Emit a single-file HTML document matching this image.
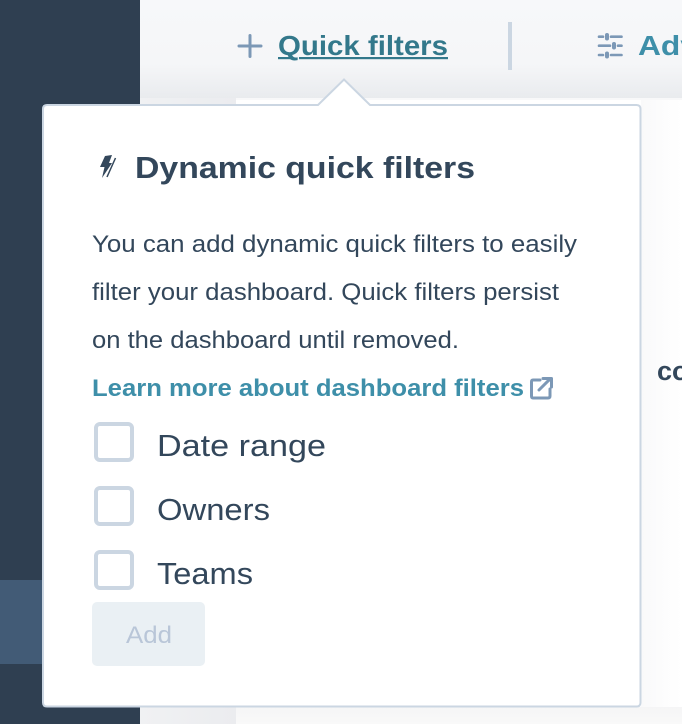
<!DOCTYPE html>
<html><head><meta charset="utf-8">
<style>
html,body{margin:0;padding:0;width:682px;height:724px;overflow:hidden;background:#f6f8fa}
svg{display:block}
text{font-family:"Liberation Sans",sans-serif;fill:#33475b}
</style></head>
<body>
<svg width="682" height="724" viewBox="0 0 682 724" xmlns="http://www.w3.org/2000/svg">
<defs>
<linearGradient id="top" x1="0" y1="0" x2="0" y2="1"><stop offset="0" stop-color="#f7f8fa"/><stop offset="0.65" stop-color="#f5f6f8"/><stop offset="1" stop-color="#e9ebee"/></linearGradient>
<linearGradient id="left" x1="0" y1="0" x2="1" y2="0"><stop offset="0" stop-color="#f0f1f3"/><stop offset="1" stop-color="#ebecef"/></linearGradient>
<linearGradient id="right" x1="0" y1="0" x2="1" y2="0"><stop offset="0" stop-color="#f9f9fa"/><stop offset="0.6" stop-color="#fdfdfd"/><stop offset="1" stop-color="#ffffff"/></linearGradient>
<linearGradient id="bot" x1="0" y1="0" x2="0" y2="1"><stop offset="0" stop-color="#f5f5f6"/><stop offset="1" stop-color="#f9f9f9"/></linearGradient>
</defs>
<rect x="140" y="0" width="542" height="98" fill="url(#top)"/>
<rect x="140" y="98" width="96" height="626" fill="url(#left)"/>
<rect x="236" y="98" width="446" height="626" fill="#ffffff"/>
<rect x="236" y="98" width="446" height="2" fill="#f8f8f9"/>
<rect x="641" y="100" width="41" height="624" fill="url(#right)"/>
<rect x="236" y="707" width="446" height="17" fill="url(#bot)"/>
<rect x="0" y="0" width="140" height="724" fill="#2f3f51"/>
<rect x="0" y="580" width="44" height="84" fill="#425b76"/>

<path d="M239 46H261M250 35.500V56.500" stroke="#7c98b6" stroke-width="3" stroke-linecap="round" fill="none"/>
<text x="278" y="55" font-size="28" font-weight="700" style="fill:#33788b" textLength="170" lengthAdjust="spacingAndGlyphs">Quick filters</text>
<rect x="278" y="57" width="14" height="2.200" fill="#33788b"/>
<rect x="299" y="57" width="149" height="2.200" fill="#33788b"/>
<rect x="508" y="22" width="4" height="48" fill="#cbd6e2"/>
<g stroke="#7c98b6" stroke-linecap="round" fill="none">
<path d="M599 36.700H603M611 36.700H621.500M599 45.700H610M618 45.700H621.500M599 55H603M611 55H621.500" stroke-width="2.600"/>
<path d="M607 35V38.500M614 44V47.500M607 53.500V56.500" stroke-width="4"/>
</g>
<text x="638" y="55" font-size="28" font-weight="700" style="fill:#3e8fa9" textLength="60" lengthAdjust="spacingAndGlyphs">Adv</text>
<text x="657" y="380" font-size="27" font-weight="700">co</text>

<path d="M47 105H318L344 79.500L370 105H636.500Q640.500 105 640.500 109V702.500Q640.500 706.500 636.500 706.500H47Q43 706.500 43 702.500V109Q43 105 47 105Z" fill="#fff" stroke="#cbd6e2" stroke-width="2"/>

<path d="M105 156L112 155L109 163H112L102 178L104.500 167H100Z" fill="#33475b"/>
<path d="M115.500 158L107 177" stroke="#33475b" stroke-width="1.500" fill="none"/>
<text x="135" y="178" font-size="31" font-weight="700" textLength="340" lengthAdjust="spacingAndGlyphs">Dynamic quick filters</text>

<text x="92" y="252" font-size="24" textLength="485" lengthAdjust="spacingAndGlyphs">You can add dynamic quick filters to easily</text>
<text x="92" y="300" font-size="24" textLength="467" lengthAdjust="spacingAndGlyphs">filter your dashboard. Quick filters persist</text>
<text x="92" y="348" font-size="24" textLength="367" lengthAdjust="spacingAndGlyphs">on the dashboard until removed.</text>
<text x="92" y="396" font-size="24" font-weight="700" style="fill:#3e8fa9" textLength="432" lengthAdjust="spacingAndGlyphs">Learn more about dashboard filters</text>
<g stroke="#7c98b6" stroke-width="3" fill="none" stroke-linecap="round" stroke-linejoin="round">
<path d="M540 380H533Q531.500 380 531.500 382V396Q531.500 398 533 398H548Q550 398 550 396V389"/>
<path d="M539 390L550 379M543 378.500H551.500V387"/>
</g>

<rect x="96" y="424" width="36" height="36" rx="4" fill="#fff" stroke="#cbd6e2" stroke-width="4"/>
<rect x="96" y="488" width="36" height="36" rx="4" fill="#fff" stroke="#cbd6e2" stroke-width="4"/>
<rect x="96" y="552" width="36" height="36" rx="4" fill="#fff" stroke="#cbd6e2" stroke-width="4"/>
<text x="157" y="456" font-size="31" textLength="169" lengthAdjust="spacingAndGlyphs">Date range</text>
<text x="157" y="520" font-size="31" textLength="113" lengthAdjust="spacingAndGlyphs">Owners</text>
<text x="157" y="584" font-size="31" textLength="96" lengthAdjust="spacingAndGlyphs">Teams</text>

<rect x="92" y="602" width="113" height="64" rx="5" fill="#eaf0f4"/>
<text x="126" y="643" font-size="24" style="fill:#b9c6d8" textLength="46" lengthAdjust="spacingAndGlyphs">Add</text>
</svg>
</body></html>
